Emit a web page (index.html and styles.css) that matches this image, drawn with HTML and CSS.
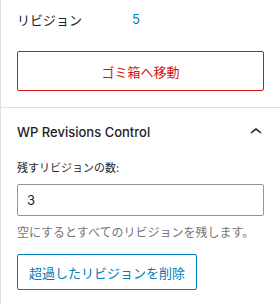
FILE: index.html
```html
<!DOCTYPE html>
<html lang="ja">
<head>
    <meta charset="UTF-8">
    <meta name="viewport" content="width=device-width, initial-scale=1.0">
    <title>リビジョン</title>
    <link rel="stylesheet" href="styles.css">
</head>
<body>
    <div class="sidebar">
        <div class="panel">
            <div class="post-row">
                <span class="row-label">リビジョン</span>
                <span class="row-value">5</span>
            </div>
            <button type="button" class="btn btn-trash">ゴミ箱へ移動</button>
        </div>
        <div class="panel panel-open">
            <div class="panel-title">
                <span>WP Revisions Control</span>
                <svg class="chevron" width="24" height="24" viewBox="0 0 24 24">
                    <path d="M6.5 12.4L12 8l5.5 4.4-.9 1.2L12 10l-4.6 3.6-1-1.2z"/>
                </svg>
            </div>
            <div class="field">
                <label for="keep">残すリビジョンの数:</label>
                <input type="text" id="keep" value="3">
                <p class="help">空にするとすべてのリビジョンを残します。</p>
            </div>
            <button type="button" class="btn btn-purge">超過したリビジョンを削除</button>
        </div>
    </div>
</body>
</html>
```

FILE: styles.css
```css
body {
    margin: 0;
    padding: 0;
    background-color: #fff;
    font-family: Inter, "Noto Sans CJK JP", sans-serif;
    font-size: 13px;
    color: #1e1e1e;
}
.sidebar {
    width: 279px;
    height: 304px;
    border-left: 1px solid #e0e0e0;
    background: #fff;
}
.panel {
    padding: 0 16px 16px;
    border-bottom: 1px solid #e0e0e0;
}
.panel-open {
    border-bottom: none;
}
.post-row {
    display: flex;
    align-items: center;
    height: 38px;
    margin-bottom: 13px;
}
.row-label {
    width: 115px;
}
.row-value {
    color: #007cba;
}
.btn {
    display: block;
    box-sizing: border-box;
    font-family: inherit;
    font-size: 13px;
    background: #fff;
    border-radius: 2px;
    cursor: pointer;
}
.btn-trash {
    width: 100%;
    height: 40px;
    color: #cc1818;
    border: 1px solid #cc1818;
}
.panel-title {
    display: flex;
    align-items: center;
    justify-content: space-between;
    height: 48px;
    margin: 0 -16px 5px;
    padding: 0 12px 0 16px;
    font-weight: 500;
}
.chevron {
    fill: #1e1e1e;
}
.field label {
    display: block;
    font-size: 11px;
    line-height: 15px;
    margin-bottom: 8px;
}
.field input {
    display: block;
    box-sizing: border-box;
    width: 100%;
    height: 32px;
    padding: 0 9px;
    font-family: inherit;
    font-size: 13px;
    color: #1e1e1e;
    border: 1px solid #949494;
    border-radius: 2px;
}
.help {
    margin: 8px 0 12px;
    font-size: 12px;
    line-height: 18px;
    color: #757575;
}
.btn-purge {
    height: 36px;
    padding: 0 11px;
    color: #007cba;
    border: 1px solid #007cba;
}
```
